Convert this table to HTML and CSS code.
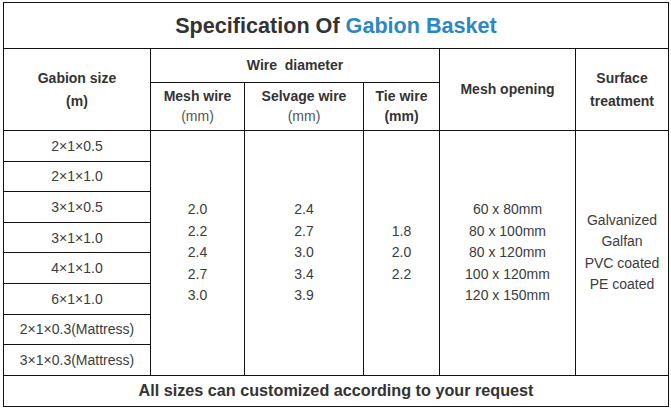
FILE: index.html
```html
<!DOCTYPE html>
<html>
<head>
<meta charset="utf-8">
<link rel="stylesheet" href="styles.css">
</head>
<body>
<table class="spec">
  <colgroup>
    <col class="c1"><col class="c2"><col class="c3"><col class="c4"><col class="c5"><col class="c6">
  </colgroup>
  <tr class="r-title"><td colspan="6" class="title">Specification Of <span class="blue">Gabion Basket</span></td></tr>
  <tr class="r-h1">
    <th rowspan="2">Gabion size<br>(m)</th>
    <th colspan="3">Wire&nbsp; diameter</th>
    <th rowspan="2">Mesh opening</th>
    <th rowspan="2">Surface<br>treatment</th>
  </tr>
  <tr class="r-h2">
    <th>Mesh wire<br><span class="unit">(mm)</span></th>
    <th>Selvage wire<br><span class="unit">(mm)</span></th>
    <th>Tie wire<br>(mm)</th>
  </tr>
  <tr class="r">
    <td>2×1×0.5</td>
    <td rowspan="8" class="list">2.0<br>2.2<br>2.4<br>2.7<br>3.0</td>
    <td rowspan="8" class="list">2.4<br>2.7<br>3.0<br>3.4<br>3.9</td>
    <td rowspan="8" class="list">1.8<br>2.0<br>2.2</td>
    <td rowspan="8" class="list">60 x 80mm<br>80 x 100mm<br>80 x 120mm<br>100 x 120mm<br>120 x 150mm</td>
    <td rowspan="8" class="list">Galvanized<br>Galfan<br>PVC coated<br>PE coated</td>
  </tr>
  <tr class="r"><td>2×1×1.0</td></tr>
  <tr class="r"><td>3×1×0.5</td></tr>
  <tr class="r"><td>3×1×1.0</td></tr>
  <tr class="r"><td>4×1×1.0</td></tr>
  <tr class="r"><td>6×1×1.0</td></tr>
  <tr class="r"><td>2×1×0.3(Mattress)</td></tr>
  <tr class="r"><td>3×1×0.3(Mattress)</td></tr>
  <tr class="r-foot"><td colspan="6" class="foot">All sizes can customized according to your request</td></tr>
</table>
</body>
</html>
```
FILE: styles.css
```css
html, body {
  margin: 0;
  padding: 0;
  background: #fff;
}
body {
  padding: 2px 0 0 3px;
  font-family: "Liberation Sans", Arial, sans-serif;
  color: #3c3c3c;
}
.spec {
  border-collapse: collapse;
  table-layout: fixed;
  width: 665px;
}
.c1 { width: 147px; }
.c2 { width: 94px; }
.c3 { width: 119px; }
.c4 { width: 76px; }
.c5 { width: 136px; }
.c6 { width: 93px; }
.spec td, .spec th {
  border: 1px solid #111;
  padding: 0;
  text-align: center;
  vertical-align: middle;
}
.spec th {
  font-weight: bold;
  font-size: 14px;
  color: #333;
}
.r-title { height: 46px; }
.title {
  font-size: 21.6px;
  font-weight: bold;
  color: #333;
}
.blue { color: #2b87c6; }
.r-h1 { height: 34px; }
.r-h1 th { line-height: 23px; }
.r-h2 { height: 48px; }
.r-h2 th { line-height: 20px; padding-bottom: 1px; }
.unit {
  font-weight: normal;
  color: #555;
}
.r { height: 30.6px; }
.r td {
  font-size: 14px;
  line-height: 18px;
}
.spec td.list {
  line-height: 21.5px;
}
.r-foot { height: 31px; }
.foot {
  font-size: 16.2px;
  font-weight: bold;
  color: #333;
}
```
